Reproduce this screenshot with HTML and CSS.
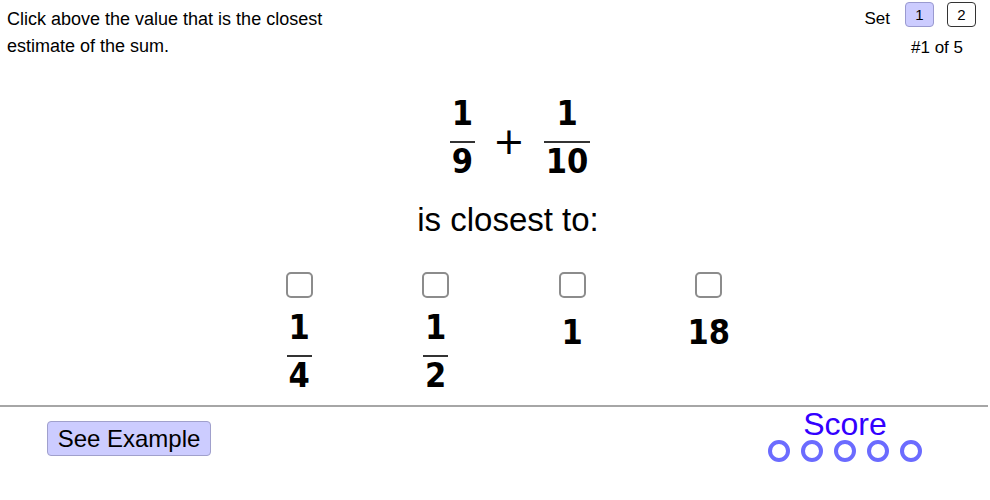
FILE: index.html
```html
<!DOCTYPE html>
<html lang="en">
<head>
    <meta charset="UTF-8">
    <title>Estimate the Sum</title>
    <link rel="stylesheet" href="styles.css">
</head>
<body>
    <div class="top">
        <div class="prompt">Click above the value that is the closest estimate of the sum.</div>
        <div class="set-panel">
            <div class="set-row">
                <span class="set-label">Set</span>
                <button class="set-btn active">1</button>
                <button class="set-btn">2</button>
            </div>
            <div class="counter">#1 of 5</div>
        </div>
    </div>

    <!-- The sum -->
    <div class="expr">
        <div class="frac">
            <span class="num">1</span>
            <span class="bar"></span>
            <span class="den">9</span>
        </div>
        <span class="plus">+</span>
        <div class="frac">
            <span class="num">1</span>
            <span class="bar"></span>
            <span class="den">10</span>
        </div>
    </div>

    <div class="question">is closest to:</div>

    <!-- Answer choices -->
    <div class="choices">
        <div class="choice">
            <span class="box"></span>
            <div class="frac">
                <span class="num">1</span>
                <span class="bar"></span>
                <span class="den">4</span>
            </div>
        </div>
        <div class="choice">
            <span class="box"></span>
            <div class="frac">
                <span class="num">1</span>
                <span class="bar"></span>
                <span class="den">2</span>
            </div>
        </div>
        <div class="choice">
            <span class="box"></span>
            <span class="whole">1</span>
        </div>
        <div class="choice">
            <span class="box"></span>
            <span class="whole">18</span>
        </div>
    </div>

    <div class="divider"></div>

    <div class="footer">
        <button class="example-btn">See Example</button>
        <div class="score">
            <div class="score-title">Score</div>
            <div class="dots">
                <span class="dot"></span>
                <span class="dot"></span>
                <span class="dot"></span>
                <span class="dot"></span>
                <span class="dot"></span>
            </div>
        </div>
    </div>
</body>
</html>
```

FILE: styles.css
```css
body {
    font-family: "Liberation Sans", Arial, sans-serif;
    margin: 0;
    width: 990px;
    background-color: #ffffff;
    color: #000000;
}

.top {
    display: flex;
    justify-content: space-between;
    align-items: flex-start;
    height: 60px;
    padding: 2px 14px 0 7px;
    box-sizing: border-box;
}

.prompt {
    width: 340px;
    font-size: 18px;
    line-height: 27px;
    padding-top: 4px;
}

.set-panel {
    display: flex;
    flex-direction: column;
    align-items: flex-end;
}

.set-row {
    display: flex;
    align-items: flex-start;
}

.set-label {
    font-size: 17px;
    line-height: 20px;
    margin: 7px 15px 0 0;
}

.set-btn {
    width: 29px;
    height: 25px;
    padding: 0;
    margin-left: 13px;
    font-family: "Liberation Sans", Arial, sans-serif;
    font-size: 15px;
    color: #000;
    background: #ffffff;
    border: 1px solid #333;
    border-radius: 4px;
}

.set-btn:first-of-type {
    margin-left: 0;
}

.set-btn.active {
    background: #ccccff;
    border-color: #9a9ad0;
}

.counter {
    font-size: 17px;
    line-height: 18px;
    margin-top: 10px;
    margin-right: 13px;
}

/* fractions */
.frac {
    display: inline-flex;
    flex-direction: column;
    align-items: center;
    font-family: "DejaVu Sans Condensed", "DejaVu Sans", sans-serif;
    font-stretch: condensed;
    font-weight: bold;
    font-size: 34px;
}

.frac .num,
.frac .den {
    line-height: 32px;
}

.frac .bar {
    align-self: stretch;
    height: 2px;
    margin: 12px -2px 2px;
    background: #333;
}

.expr {
    display: flex;
    justify-content: center;
    align-items: flex-start;
    padding-left: 50px;
    margin-top: 37px;
}

.plus {
    font-family: "DejaVu Sans", sans-serif;
    font-size: 38px;
    line-height: 38px;
    margin: 25px 21px 0 20px;
}

.question {
    text-align: center;
    font-size: 33px;
    line-height: 36px;
    padding-left: 26px;
    margin-top: 25px;
}

.choices {
    display: grid;
    grid-template-columns: repeat(4, 136.5px);
    margin: 34px 0 0 231px;
}

.choice {
    display: flex;
    flex-direction: column;
    align-items: center;
}

.box {
    width: 27px;
    height: 26px;
    box-sizing: border-box;
    border: 2px solid #8c8c8c;
    border-radius: 5px;
    margin-bottom: 13px;
}

.whole {
    font-family: "DejaVu Sans Condensed", "DejaVu Sans", sans-serif;
    font-stretch: condensed;
    font-weight: bold;
    font-size: 34px;
    line-height: 32px;
    margin-top: 5px;
}

.divider {
    width: 988px;
    height: 2px;
    background: #a6a6a6;
    margin-top: 14px;
}

.footer {
    display: flex;
    justify-content: space-between;
    align-items: flex-start;
}

.example-btn {
    margin: 14px 0 0 47px;
    width: 164px;
    height: 35px;
    padding: 0;
    font-family: "Liberation Sans", Arial, sans-serif;
    font-size: 24px;
    color: #000;
    background: #ccccff;
    border: 1px solid #a0a0cc;
    border-radius: 4px;
}

.score {
    width: 160px;
    margin-right: 65px;
    text-align: center;
}

.score-title {
    font-size: 32px;
    line-height: 32px;
    color: #3300ff;
    margin-top: 1px;
}

.dots {
    display: flex;
    justify-content: center;
    gap: 11px;
}

.dot {
    width: 22px;
    height: 22px;
    box-sizing: border-box;
    border: 4.5px solid #6b6bff;
    border-radius: 50%;
}
```
